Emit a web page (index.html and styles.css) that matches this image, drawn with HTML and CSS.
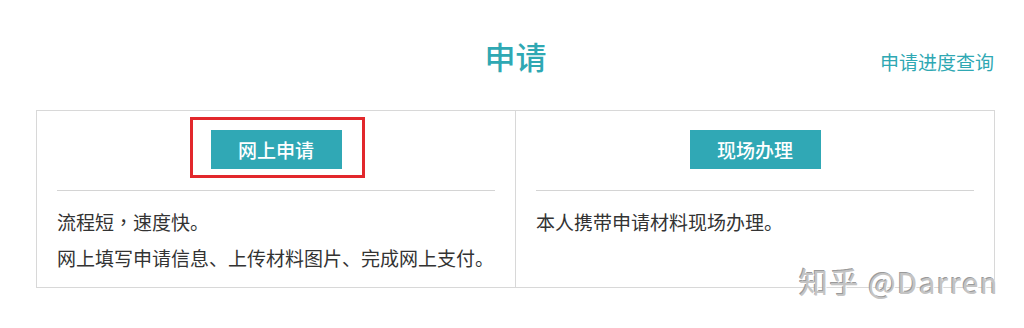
FILE: index.html
```html
<!DOCTYPE html>
<html lang="zh-CN">
<head>
<meta charset="utf-8">
<title>申请</title>
<link rel="stylesheet" href="styles.css">
</head>
<body>
<div class="page">
  <header class="head">
    <span class="spacer"></span>
    <h1 class="title">申请</h1>
    <a class="query" href="#">申请进度查询</a>
  </header>
  <section class="panel">
    <div class="col">
      <div class="btn-row">
        <span class="btn-wrap">
          <a class="btn" href="#">网上申请</a>
          <span class="mark"></span>
        </span>
      </div>
      <div class="desc">
        <p>流程短<span class="punct" lang="zh-TW">，</span>速度快。</p>
        <p>网上填写申请信息、上传材料图片、完成网上支付。</p>
      </div>
    </div>
    <div class="col col-right">
      <div class="btn-row">
        <span class="btn-wrap">
          <a class="btn" href="#">现场办理</a>
        </span>
      </div>
      <div class="desc">
        <p>本人携带申请材料现场办理。</p>
      </div>
    </div>
  </section>
  <div class="watermark">知乎 @Darren</div>
</div>
</body>
</html>
```

FILE: styles.css
```css
html, body {
  margin: 0;
  padding: 0;
  background: #fff;
}
body {
  font-family: "Noto Sans CJK SC", "Noto Sans", sans-serif;
  color: #333;
}
.page {
  position: relative;
  width: 959px;
  padding-left: 36px;
  height: 328px;
}
.head {
  display: grid;
  grid-template-columns: 1fr auto 1fr;
  align-items: start;
  height: 110px;
}
.title {
  margin: 40px 0 0;
  font-size: 31px;
  line-height: 31px;
  font-weight: 500;
  color: #2fa8b3;
}
.query {
  justify-self: end;
  margin-top: 52px;
  margin-right: 1px;
  font-size: 19px;
  line-height: 19px;
  color: #2fa8b3;
  text-decoration: none;
}
.panel {
  display: grid;
  grid-template-columns: 478px 1fr;
  border: 1px solid #d8d8d8;
  height: 176px;
}
.col {
  padding: 19px 20px 0;
}
.col-right {
  border-left: 1px solid #d8d8d8;
}
.btn-row {
  display: flex;
  justify-content: center;
  padding-bottom: 21px;
  border-bottom: 1px solid #d4d4d4;
}
.btn-wrap {
  position: relative;
  display: block;
}
.btn {
  display: flex;
  align-items: center;
  justify-content: center;
  width: 131px;
  height: 39px;
  background: #30a8b5;
  color: #fff;
  font-size: 19px;
  font-weight: 500;
  text-decoration: none;
}
.mark {
  position: absolute;
  top: -13px;
  left: -21px;
  right: -23px;
  bottom: -9px;
  border: 3px solid #e2282c;
}
.desc {
  padding-top: 13px;
}
.desc p {
  margin: 0;
  font-size: 19px;
  line-height: 36px;
  color: #333;
}
.punct {
  font-family: "Noto Sans CJK TC", "Noto Sans CJK SC", sans-serif;
}
.watermark {
  position: absolute;
  left: 799px;
  top: 264px;
  font-family: "Noto Sans CJK SC", "Noto Sans", sans-serif;
  font-size: 29px;
  line-height: 34px;
  color: #c4c4c4;
  letter-spacing: 1.6px;
  text-shadow: 1px 1px 0 #fff, -1px -1px 0 #9a9a9a;
  white-space: nowrap;
}
```
